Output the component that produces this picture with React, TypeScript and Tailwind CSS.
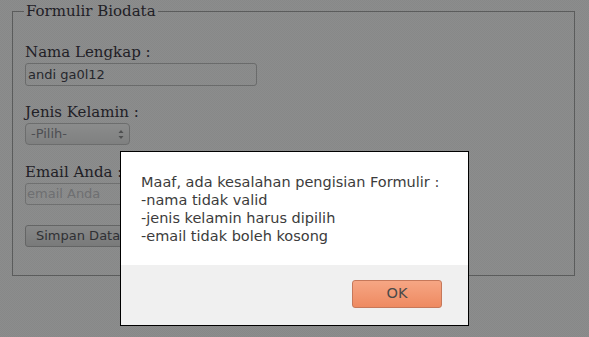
import React from "react";

const serif = "font-['DejaVu_Serif',serif] text-[15px] leading-[20px] text-[#1f2026]";

export default function App() {
  return (
    <div className="relative h-[337px] w-full overflow-hidden bg-[#8a8b8b] bg-[repeating-conic-gradient(#8c8d8d_0%_25%,#878888_0%_50%)] bg-[length:2px_2px]">
      <fieldset className="ml-3 mr-[14px] mt-px border border-[#5b5c5c] p-0">
        <legend className={`ml-[11px] px-[2px] ${serif}`}>Formulir Biodata</legend>
        <div className="flex flex-col items-start px-3 pt-[21px] pb-[28px] font-['DejaVu_Sans',sans-serif]">
          <label className={`mb-px ${serif}`}>Nama Lengkap :</label>
          <div className="flex h-[23px] w-[232px] items-center rounded-[3px] border border-[#6a6b6b] px-[2px] text-[13px] text-[#26272c]">
            andi ga0l12
          </div>

          <label className={`mt-4 mb-px ${serif}`}>Jenis Kelamin :</label>
          <div className="flex h-[22px] w-[105px] items-center justify-between rounded-[4px] border border-[#6c6d6d] bg-gradient-to-b from-[#8b8c8c] to-[#7f8080] pl-[5px] pr-[5px] text-[13px] text-[#4d4e52]">
            <span>-Pilih-</span>
            <svg width="6" height="11" viewBox="0 0 6 11">
              <path d="M3 1 L5.5 4 L0.5 4 Z" fill="#4e4f50" />
              <path d="M3 10 L5.5 7 L0.5 7 Z" fill="#4e4f50" />
            </svg>
          </div>

          <label className={`mt-[17px] mb-px ${serif}`}>Email Anda :</label>
          <div className="flex h-[22px] w-[232px] items-center rounded-[3px] border border-[#6f7070] px-px text-[13px] text-[#6e6f71]">
            email Anda
          </div>

          <div className="mt-5 flex h-[22px] items-center rounded-[3px] border border-[#646565] bg-gradient-to-b from-[#878888] to-[#797a7a] px-[10px] text-[13px] text-[#2f3034]">
            Simpan Data
          </div>
        </div>
      </fieldset>

      <div className="absolute left-[120px] top-[151px] flex h-[175px] w-[349px] flex-col border border-black bg-white font-['DejaVu_Sans',sans-serif]">
        <div className="h-[113px] bg-white pl-5 pt-[21px] text-[14.5px] leading-[18px] text-[#3c3c3c]">
          <div>Maaf, ada kesalahan pengisian Formulir :</div>
          <div>-nama tidak valid</div>
          <div>-jenis kelamin harus dipilih</div>
          <div>-email tidak boleh kosong</div>
        </div>
        <div className="flex flex-1 items-start justify-end bg-[#f0f0f0] pr-[26px] pt-[15px]">
          <div className="flex h-[28px] w-[90px] items-center justify-center rounded-[3px] border border-[#c6785a] bg-gradient-to-b from-[#f6a684] to-[#ee8a61] text-[14.5px] text-[#4a4a4a]">
            OK
          </div>
        </div>
      </div>
    </div>
  );
}
